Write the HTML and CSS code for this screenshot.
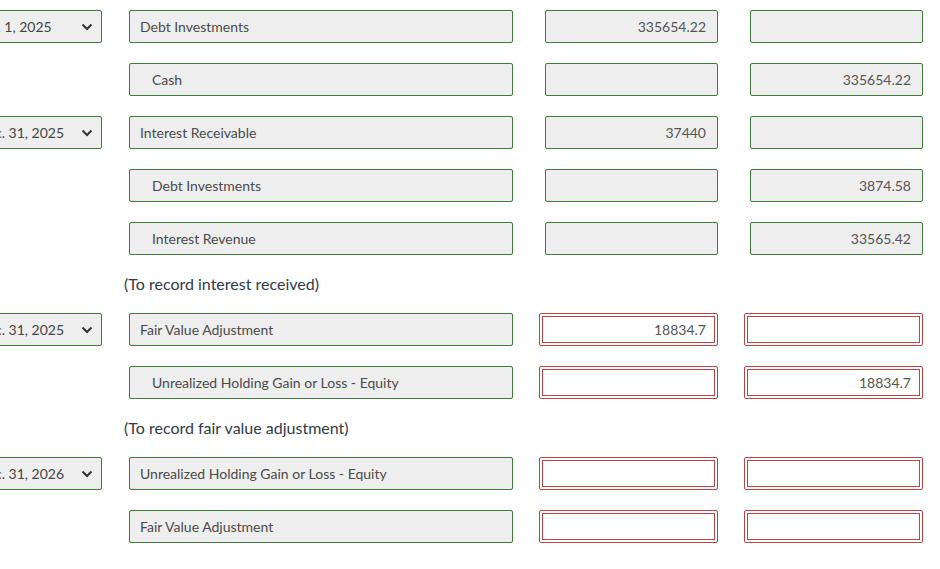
FILE: index.html
```html
<!DOCTYPE html>
<html lang="en">
<head>
    <meta charset="UTF-8">
    <title>Journal Entries</title>
    <link rel="stylesheet" href="styles.css">
</head>
<body>
    <div class="entries">
        <!-- Entry 1 -->
        <div class="row">
            <div class="date-select"><span>Jan. 1, 2025</span><svg class="chevron" width="12" height="8" viewBox="0 0 12 8"><path d="M1.5 1.5 L6 6 L10.5 1.5" fill="none" stroke="#333" stroke-width="2"/></svg></div>
            <div class="field account">Debt Investments</div>
            <div class="cell"><div class="field amount">335654.22</div></div>
            <div class="cell"><div class="field amount"></div></div>
        </div>
        <div class="row">
            <div class="date-blank"></div>
            <div class="field account credit">Cash</div>
            <div class="cell"><div class="field amount"></div></div>
            <div class="cell"><div class="field amount">335654.22</div></div>
        </div>

        <!-- Entry 2 -->
        <div class="row">
            <div class="date-select"><span>Dec. 31, 2025</span><svg class="chevron" width="12" height="8" viewBox="0 0 12 8"><path d="M1.5 1.5 L6 6 L10.5 1.5" fill="none" stroke="#333" stroke-width="2"/></svg></div>
            <div class="field account">Interest Receivable</div>
            <div class="cell"><div class="field amount">37440</div></div>
            <div class="cell"><div class="field amount"></div></div>
        </div>
        <div class="row">
            <div class="date-blank"></div>
            <div class="field account credit">Debt Investments</div>
            <div class="cell"><div class="field amount"></div></div>
            <div class="cell"><div class="field amount">3874.58</div></div>
        </div>
        <div class="row">
            <div class="date-blank"></div>
            <div class="field account credit">Interest Revenue</div>
            <div class="cell"><div class="field amount"></div></div>
            <div class="cell"><div class="field amount">33565.42</div></div>
        </div>
        <div class="note">(To record interest received)</div>

        <!-- Entry 3 -->
        <div class="row">
            <div class="date-select"><span>Dec. 31, 2025</span><svg class="chevron" width="12" height="8" viewBox="0 0 12 8"><path d="M1.5 1.5 L6 6 L10.5 1.5" fill="none" stroke="#333" stroke-width="2"/></svg></div>
            <div class="field account">Fair Value Adjustment</div>
            <div class="cell"><div class="wrong"><div class="field amount">18834.7</div></div></div>
            <div class="cell"><div class="wrong"><div class="field amount"></div></div></div>
        </div>
        <div class="row">
            <div class="date-blank"></div>
            <div class="field account credit">Unrealized Holding Gain or Loss - Equity</div>
            <div class="cell"><div class="wrong"><div class="field amount"></div></div></div>
            <div class="cell"><div class="wrong"><div class="field amount">18834.7</div></div></div>
        </div>
        <div class="note">(To record fair value adjustment)</div>

        <!-- Entry 4 -->
        <div class="row">
            <div class="date-select"><span>Dec. 31, 2026</span><svg class="chevron" width="12" height="8" viewBox="0 0 12 8"><path d="M1.5 1.5 L6 6 L10.5 1.5" fill="none" stroke="#333" stroke-width="2"/></svg></div>
            <div class="field account">Unrealized Holding Gain or Loss - Equity</div>
            <div class="cell"><div class="wrong"><div class="field amount"></div></div></div>
            <div class="cell"><div class="wrong"><div class="field amount"></div></div></div>
        </div>
        <div class="row">
            <div class="date-blank"></div>
            <div class="field account">Fair Value Adjustment</div>
            <div class="cell"><div class="wrong"><div class="field amount"></div></div></div>
            <div class="cell"><div class="wrong"><div class="field amount"></div></div></div>
        </div>
    </div>
</body>
</html>
```

FILE: styles.css
```css
* {
    margin: 0;
    padding: 0;
    box-sizing: border-box;
}

body {
    font-family: Lato, "Open Sans", sans-serif;
    background-color: #fff;
    color: #444;
    overflow: hidden;
}

/* page is scrolled a bit, so the date column is cut off on the left */
.entries {
    margin-left: -32px;
    padding-top: 10px;
    display: flex;
    flex-direction: column;
    gap: 20px;
}

.row {
    display: flex;
    align-items: center;
    height: 33px;
}

.date-select,
.date-blank {
    width: 134px;
    height: 33px;
    margin-right: 27px;
    flex-shrink: 0;
}

.date-select {
    display: flex;
    align-items: center;
    justify-content: space-between;
    background-color: #eeeeee;
    border: 1px solid #3f7a3a;
    border-radius: 2px;
    padding: 0 8px 0 8px;
    font-size: 14px;
    color: #444;
}

.chevron {
    display: block;
}

.field {
    height: 33px;
    background-color: #eeeeee;
    border: 1px solid #3f7a3a;
    border-radius: 2px;
    font-size: 14px;
    display: flex;
    align-items: center;
    white-space: nowrap;
}

.account {
    width: 384px;
    padding-left: 10px;
    color: #4a4a4a;
    flex-shrink: 0;
}

.account.credit {
    padding-left: 22px;
}

.cell {
    width: 179px;
    margin-left: 26px;
    display: flex;
    justify-content: flex-end;
    flex-shrink: 0;
}

.amount {
    width: 173px;
    justify-content: flex-end;
    padding-right: 11px;
    color: #555;
}

/* wrong answers get a double red outline */
.wrong {
    width: 179px;
    height: 33px;
    border: 1px solid #b94545;
    border-radius: 2px;
    padding: 2px;
    background-color: #fff;
}

.wrong .amount {
    width: 100%;
    height: 100%;
    background-color: #fff;
    border: 1px solid #b94545;
    border-radius: 0;
    padding-right: 8px;
}

.note {
    margin-left: 156px;
    height: 18px;
    line-height: 18px;
    font-size: 16px;
    color: #2f3a48;
}
```
